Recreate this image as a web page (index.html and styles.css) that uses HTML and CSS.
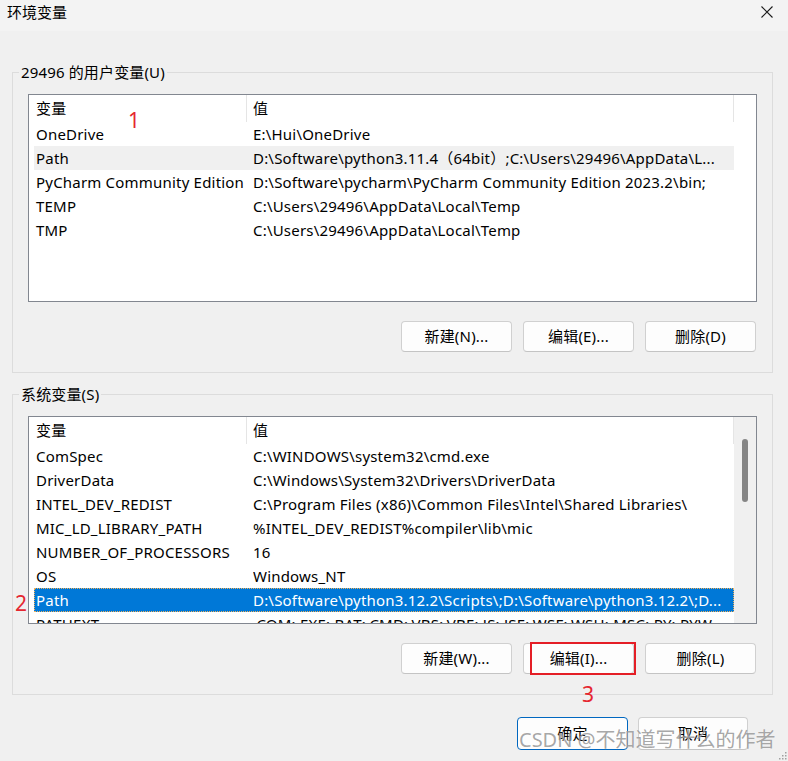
FILE: index.html
```html
<!DOCTYPE html>
<html lang="zh-CN">
<head>
<meta charset="utf-8">
<title>环境变量</title>
<link rel="stylesheet" href="styles.css">
</head>
<body>
<div class="window">
  <div class="titlebar">
    <span class="title">环境变量</span>
    <svg class="close" width="12" height="12" viewBox="0 0 12 12"><path d="M0.5 0.5 L11.5 11.5 M11.5 0.5 L0.5 11.5" stroke="#1b1b1b" stroke-width="1.1" fill="none"/></svg>
  </div>
  <div class="main">
    <fieldset class="group">
      <legend>29496 的用户变量(U)</legend>
      <div class="list">
        <div class="table">
          <div class="header"><div class="hcell hname">变量</div><div class="hcell hvalue">值</div></div>
          <div class="row"><span class="c-name">OneDrive</span><span class="c-value">E:\Hui\OneDrive</span></div>
          <div class="row hover"><span class="c-name">Path</span><span class="c-value">D:\Software\python3.11.4（64bit）;C:\Users\29496\AppData\L...</span></div>
          <div class="row"><span class="c-name">PyCharm Community Edition</span><span class="c-value">D:\Software\pycharm\PyCharm Community Edition 2023.2\bin;</span></div>
          <div class="row"><span class="c-name">TEMP</span><span class="c-value">C:\Users\29496\AppData\Local\Temp</span></div>
          <div class="row"><span class="c-name">TMP</span><span class="c-value">C:\Users\29496\AppData\Local\Temp</span></div>
        </div>
      </div>
      <div class="buttons">
        <button class="btn">新建(N)...</button>
        <button class="btn">编辑(E)...</button>
        <button class="btn">删除(D)</button>
      </div>
    </fieldset>

    <fieldset class="group group-sys">
      <legend>系统变量(S)</legend>
      <div class="list">
        <div class="table">
          <div class="header"><div class="hcell hname">变量</div><div class="hcell hvalue">值</div></div>
          <div class="row"><span class="c-name">ComSpec</span><span class="c-value">C:\WINDOWS\system32\cmd.exe</span></div>
          <div class="row"><span class="c-name">DriverData</span><span class="c-value">C:\Windows\System32\Drivers\DriverData</span></div>
          <div class="row"><span class="c-name">INTEL_DEV_REDIST</span><span class="c-value">C:\Program Files (x86)\Common Files\Intel\Shared Libraries\</span></div>
          <div class="row"><span class="c-name">MIC_LD_LIBRARY_PATH</span><span class="c-value">%INTEL_DEV_REDIST%compiler\lib\mic</span></div>
          <div class="row"><span class="c-name">NUMBER_OF_PROCESSORS</span><span class="c-value">16</span></div>
          <div class="row"><span class="c-name">OS</span><span class="c-value">Windows_NT</span></div>
          <div class="row selected"><span class="c-name">Path</span><span class="c-value">D:\Software\python3.12.2\Scripts\;D:\Software\python3.12.2\;D...</span></div>
          <div class="row"><span class="c-name">PATHEXT</span><span class="c-value">.COM;.EXE;.BAT;.CMD;.VBS;.VBE;.JS;.JSE;.WSF;.WSH;.MSC;.PY;.PYW</span></div>
        </div>
        <div class="scrollbar"><div class="thumb"></div></div>
      </div>
      <div class="buttons">
        <button class="btn">新建(W)...</button>
        <button class="btn">编辑(I)...</button>
        <button class="btn">删除(L)</button>
      </div>
    </fieldset>

    <div class="footer">
      <button class="btn btn-wide btn-default">确定</button>
      <button class="btn btn-wide">取消</button>
    </div>
  </div>

  <span class="mark mark-1">1</span>
  <span class="mark mark-2">2</span>
  <span class="mark mark-3">3</span>
  <div class="highlight-box"></div>
  <div class="watermark">CSDN @不知道写什么的作者</div>
  <svg class="grip" width="9" height="9" viewBox="0 0 9 9">
    <rect x="7" y="1" width="1.5" height="1.5" fill="#a0a0a0"/>
    <rect x="4" y="4" width="1.5" height="1.5" fill="#a0a0a0"/>
    <rect x="7" y="4" width="1.5" height="1.5" fill="#a0a0a0"/>
    <rect x="1" y="7" width="1.5" height="1.5" fill="#a0a0a0"/>
    <rect x="4" y="7" width="1.5" height="1.5" fill="#a0a0a0"/>
    <rect x="7" y="7" width="1.5" height="1.5" fill="#a0a0a0"/>
  </svg>
</div>
</body>
</html>
```

FILE: styles.css
```css
html, body {
  margin: 0;
  padding: 0;
}
body {
  width: 788px;
  height: 761px;
  overflow: hidden;
  background: #f0f0f0;
  font-family: "Noto Sans", "Noto Sans CJK SC", sans-serif;
  font-size: 15px;
  color: #000;
}
.window {
  position: relative;
  width: 788px;
  height: 761px;
}
.titlebar {
  height: 31px;
  background: #f3f3f3;
  display: flex;
  justify-content: space-between;
  align-items: flex-start;
  padding: 0 15px 0 7px;
  box-sizing: border-box;
}
.title {
  line-height: 24px;
  font-size: 15px;
}
.close {
  margin-top: 6px;
  display: block;
}
.main {
  padding: 29px 15px 0 12px;
}
.group {
  margin: 0;
  border: 1px solid #dcdcdc;
  padding: 10px 15px 20px 15px;
  min-width: 0;
}
.group-sys {
  margin-top: 9px;
}
.group legend {
  padding: 0 2px;
  margin-left: -9px;
  line-height: 24px;
  font-size: 15px;
  letter-spacing: 0.15px;
}
.list {
  height: 208px;
  box-sizing: border-box;
  border: 1px solid #828790;
  background: #fff;
  display: flex;
  overflow: hidden;
}
.table {
  flex: 1;
  min-width: 0;
  letter-spacing: 0.2px;
}
.header {
  display: flex;
  height: 27px;
  line-height: 27px;
}
.hcell {
  box-sizing: border-box;
  border-right: 1px solid #e5e5e5;
  white-space: nowrap;
}
.hname {
  width: 218px;
  padding-left: 7px;
}
.hvalue {
  width: 487px;
  padding-left: 6px;
}
.row {
  display: flex;
  height: 24px;
  line-height: 24px;
  margin-left: 5px;
  width: 700px;
  box-sizing: border-box;
  white-space: nowrap;
}
.c-name {
  width: 219px;
  flex: none;
  padding-left: 2px;
  box-sizing: border-box;
  overflow: hidden;
}
.c-value {
  flex: 1;
  min-width: 0;
  overflow: hidden;
}
.row.hover {
  background: #f0f0f0;
}
.row.selected {
  background: #0078d7;
  color: #fff;
  outline: 1px dotted #f3b25a;
  outline-offset: -1px;
}
.scrollbar {
  width: 22px;
  flex: none;
  background: #f0f0f0;
  padding-top: 22px;
  box-sizing: border-box;
}
.thumb {
  width: 6px;
  height: 63px;
  margin-left: 8px;
  background: #858585;
  border-radius: 3px;
}
.buttons {
  display: flex;
  justify-content: flex-end;
  gap: 11px;
  margin-top: 19px;
  padding-right: 1px;
}
.btn {
  width: 111px;
  height: 31px;
  box-sizing: border-box;
  background: #fdfdfd;
  border: 1px solid #d0d0d0;
  border-bottom-color: #c4c4c4;
  border-radius: 4px;
  font-family: "Noto Sans", "Noto Sans CJK SC", sans-serif;
  font-size: 15px;
  letter-spacing: 0.2px;
  color: #000;
  padding: 0;
  line-height: 29px;
}
.footer {
  display: flex;
  justify-content: flex-end;
  gap: 10px;
  margin-top: 22px;
  padding-right: 25px;
}
.btn-wide {
  height: 33px;
  width: 110px;
  line-height: 31px;
}
.btn-default {
  width: 111px;
  border: 1px solid #0067c0;
}
.mark {
  position: absolute;
  color: #e52730;
  font-size: 21px;
  line-height: 1;
  font-family: "Noto Sans", sans-serif;
}
.mark-1 { left: 128px; top: 110px; }
.mark-2 { left: 15px; top: 593px; }
.mark-3 { left: 582px; top: 684px; }
.highlight-box {
  position: absolute;
  left: 530px;
  top: 642px;
  width: 106px;
  height: 33px;
  box-sizing: border-box;
  border: 2px solid #e41e26;
}
.watermark {
  position: absolute;
  left: 519px;
  top: 727px;
  font-size: 20px;
  line-height: 26px;
  white-space: nowrap;
  color: rgba(110, 110, 110, 0.62);
  text-shadow: 0 0 1px rgba(255, 255, 255, 0.8);
}
.grip {
  position: absolute;
  right: 1px;
  bottom: 1px;
}
```
